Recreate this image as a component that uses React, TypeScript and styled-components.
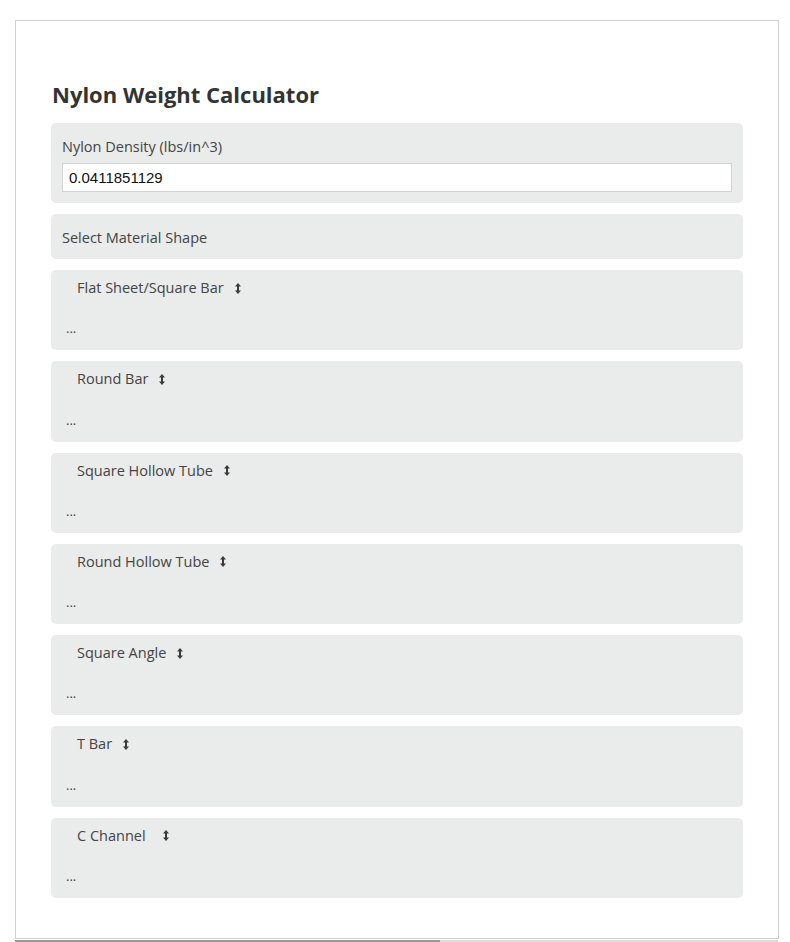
import styled, { createGlobalStyle } from "styled-components";

const Global = createGlobalStyle`
  body {
    margin: 0;
    background: #fff;
    font-family: "Segoe UI", "Open Sans", "Noto Sans", sans-serif;
    color: #333;
  }
`;

const Page = styled.div`
  padding: 20px 12px 0 15px;
`;

const Box = styled.div`
  width: 764px;
  box-sizing: border-box;
  border: 1px solid #cfcfd3;
  padding: 0 35px 40px;
`;

const Title = styled.h2`
  margin: 59px 0 15px 1px;
  font-size: 22px;
  font-weight: 700;
  line-height: 28px;
  color: #333;
`;

const Stack = styled.div`
  display: flex;
  flex-direction: column;
  gap: 11px;
`;

const Panel = styled.div`
  background: #eaebeb;
  border-radius: 5px;
  padding: 14px 11px 11px;
`;

const Label = styled.div`
  font-size: 14.5px;
  line-height: 20px;
  color: #444;
`;

const Input = styled.input`
  display: block;
  width: 100%;
  box-sizing: border-box;
  height: 29px;
  margin-top: 6px;
  border: 1px solid #d3d3d3;
  padding: 0 6px;
  font-family: "Liberation Sans", Arial, sans-serif;
  font-size: 15px;
  color: #111;
  background: #fff;
  outline: none;
`;

const Shape = styled.div`
  background: #eaebeb;
  border-radius: 5px;
  height: 80.3px;
  box-sizing: border-box;
  padding: 8px 11px 12px 15px;
  display: flex;
  flex-direction: column;
  justify-content: space-between;
`;

const ShapeHead = styled.div<{ $gap?: number }>`
  display: flex;
  align-items: center;
  gap: ${(p) => p.$gap ?? 11}px;
  padding-left: 11px;
  font-size: 14.5px;
  line-height: 20px;
  color: #444;
`;

const Dots = styled.div`
  font-size: 13px;
  line-height: 20px;
  color: #444;
`;

const Footer = styled.div`
  margin-top: 1px;
  height: 20px;
  background: linear-gradient(#999, #999) no-repeat left top / 425px 2px, #ddd;
  font-family: "DejaVu Sans", sans-serif;
  font-size: 11px;
  line-height: 20px;
  color: #555;
`;

const UpDown = () => (
  <svg width="6" height="11" viewBox="0 0 6 11">
    <path d="M3 0 L6 3.5 H4 V7.5 H6 L3 11 L0 7.5 H2 V3.5 H0 Z" fill="#3a3a3a" />
  </svg>
);

const shapes: { name: string; gap?: number }[] = [
  { name: "Flat Sheet/Square Bar" },
  { name: "Round Bar" },
  { name: "Square Hollow Tube" },
  { name: "Round Hollow Tube" },
  { name: "Square Angle" },
  { name: "T Bar" },
  { name: "C Channel", gap: 17 },
];

export default function App() {
  return (
    <>
      <Global />
      <Page>
        <Box>
          <Title>Nylon Weight Calculator</Title>
          <Stack>
            <Panel>
              <Label>Nylon Density (lbs/in^3)</Label>
              <Input defaultValue="0.0411851129" />
            </Panel>
            <Panel>
              <Label>Select Material Shape</Label>
            </Panel>
            {shapes.map((s) => (
              <Shape key={s.name}>
                <ShapeHead $gap={s.gap}>
                  {s.name}
                  <UpDown />
                </ShapeHead>
                <Dots>...</Dots>
              </Shape>
            ))}
          </Stack>
        </Box>
        <Footer>thing for calculator academy</Footer>
      </Page>
    </>
  );
}
